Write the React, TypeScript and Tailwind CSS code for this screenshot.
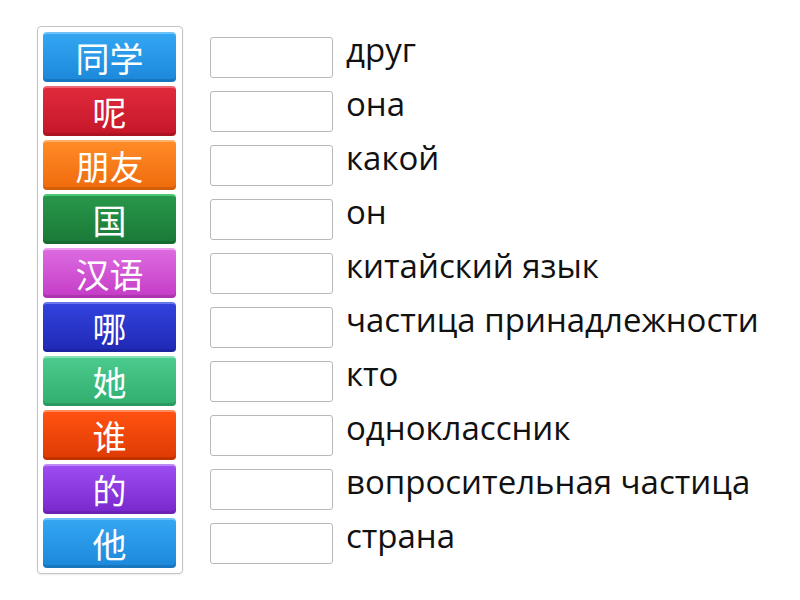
const tiles = [
  { text: "同学", cls: "bg-gradient-to-b from-[#34a6f2] to-[#1b87d9] border-t-[#6cc2f8]" },
  { text: "呢", cls: "bg-gradient-to-b from-[#e02a3c] to-[#c41528] border-t-[#ee6474]" },
  { text: "朋友", cls: "bg-gradient-to-b from-[#ff8b26] to-[#ef6a0a] border-t-[#ffb068]" },
  { text: "国", cls: "bg-gradient-to-b from-[#27974b] to-[#1a7836] border-t-[#4cc872]" },
  { text: "汉语", cls: "bg-gradient-to-b from-[#dc6ae0] to-[#c43ac6] border-t-[#eea0f0]" },
  { text: "哪", cls: "bg-gradient-to-b from-[#3242dc] to-[#1f28b6] border-t-[#6a76ec]" },
  { text: "她", cls: "bg-gradient-to-b from-[#4aca8c] to-[#2fae6e] border-t-[#86e2b4]" },
  { text: "谁", cls: "bg-gradient-to-b from-[#ff5212] to-[#dd3a02] border-t-[#ff8a5a]" },
  { text: "的", cls: "bg-gradient-to-b from-[#9c4cf0] to-[#7826cc] border-t-[#be8af6]" },
  { text: "他", cls: "bg-gradient-to-b from-[#34a6f2] to-[#1b87d9] border-t-[#6cc2f8]" },
];

const answers = [
  "друг",
  "она",
  "какой",
  "он",
  "китайский язык",
  "частица принадлежности",
  "кто",
  "одноклассник",
  "вопросительная частица",
  "страна",
];

export default function App() {
  return (
    <div className="w-[800px] h-[600px] bg-white flex items-start pl-[37px] pt-[26px]">
      {/* Tile stack */}
      <div className="flex flex-col gap-1 py-[5px] pl-[5px] pr-[6px] border border-[#c4c4c4] rounded-[4px] bg-white shadow-[0_1px_2px_rgba(0,0,0,0.08)]">
        {tiles.map((t) => (
          <div
            key={t.text}
            className={`w-[133px] h-[50px] flex items-center justify-center rounded-[4px] border-t-2 shadow-[inset_0_-3px_0_rgba(0,0,0,0.12)] text-white text-[34px] leading-none ${t.cls}`}
            style={{ fontFamily: '"Noto Sans CJK SC", "Noto Sans", sans-serif' }}
          >
            {t.text}
          </div>
        ))}
      </div>

      {/* Answer rows */}
      <div className="flex flex-col gap-1 ml-[27px] mt-[6px]">
        {answers.map((a) => (
          <div key={a} className="h-[50px] flex items-center">
            <div className="w-[123px] h-[41px] border border-[#b8b8b8] rounded-[3px] bg-white" />
            <span
              className="ml-[13px] text-[33px] text-[#111] leading-none pb-[15px]"
              style={{ fontFamily: '"Open Sans", sans-serif' }}
            >
              {a}
            </span>
          </div>
        ))}
      </div>
    </div>
  );
}
